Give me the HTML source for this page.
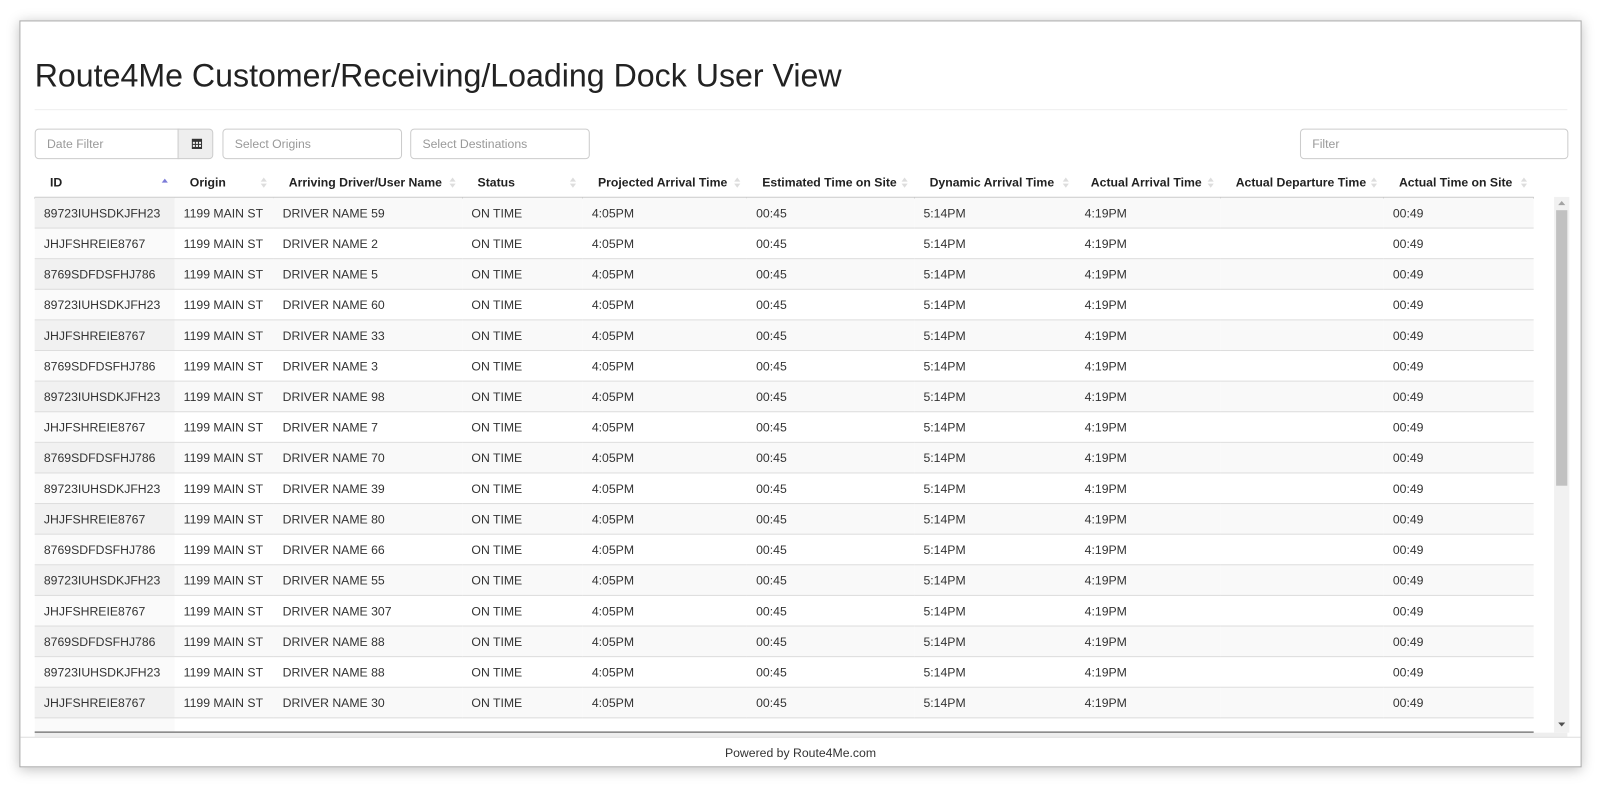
<!DOCTYPE html>
<html><head><meta charset="utf-8"><style>
*{box-sizing:border-box;margin:0;padding:0}
body{width:1600px;height:787px;background:#fff;font-family:"Liberation Sans",Arial,sans-serif;color:#333;position:relative;overflow:hidden}
.wrap{position:absolute;left:0;top:0;width:1568px;height:771px;transform:scale(1.0204);transform-origin:0 0}
.panel{position:absolute;left:19px;top:20px;width:1531px;height:732px;border:1px solid #aaa;box-shadow:0 2px 12px rgba(0,0,0,.25);background:#fff}
h1{position:absolute;left:14px;top:35px;font-size:31.5px;font-weight:normal;color:#222;white-space:nowrap}
.hr{position:absolute;left:14px;top:86px;width:1502px;height:1px;background:#eee}
.inp{position:absolute;top:105px;height:30px;border:1px solid #ccc;border-radius:4px;font-size:12px;color:#999;padding:7px 11px;background:#fff}
.cal{position:absolute;left:154px;top:105px;width:35px;height:30px;border:1px solid #ccc;border-radius:0 4px 4px 0;background:#eee}
table{border-collapse:collapse;table-layout:fixed;position:absolute;left:14px;width:1469px;font-size:12px}
th{height:30px;text-align:left;font-weight:bold;color:#222;padding:0 0 0 15px;position:relative;white-space:nowrap}
th .s{position:absolute;right:6px;top:9px;width:7px;height:12px}
td{height:30px;padding:0 0 0 9px;white-space:nowrap;border-top:1px solid #ddd;color:#333}
tr.o td{background:#f9f9f9}
tr.o td:first-child{background:#f1f1f1}
tr.e td:first-child{background:#fafafa}
.body{position:absolute;left:0;top:172px;width:1500px;height:525px;overflow:hidden}
.foot{position:absolute;left:0;top:701px;width:1529px;height:30px;border-top:1px solid #ddd;text-align:center;font-size:12px;line-height:30px;color:#333}
</style></head><body>
<div class="wrap">
<div class="panel">
<h1>Route4Me Customer/Receiving/Loading Dock User View</h1>
<div class="hr"></div>
<div class="inp" style="left:14px;width:142px;border-radius:4px 0 0 4px">Date Filter</div>
<div class="cal"><svg width="35" height="28" viewBox="0 0 35 28"><rect x="13" y="9" width="10" height="10" fill="#333"/><g fill="#eee"><rect x="14" y="12" width="2" height="2"/><rect x="17" y="12" width="2" height="2"/><rect x="20" y="12" width="2" height="2"/><rect x="14" y="15" width="2" height="2"/><rect x="17" y="15" width="2" height="2"/><rect x="20" y="15" width="2" height="2"/></g></svg></div>
<div class="inp" style="left:198px;width:176px">Select Origins</div>
<div class="inp" style="left:382px;width:176px">Select Destinations</div>
<div class="inp" style="left:1254px;width:263px">Filter</div>
<table style="top:143px;border-bottom:2px solid #333">
<colgroup><col style="width:137px"><col style="width:97px"><col style="width:185px"><col style="width:118px"><col style="width:161px"><col style="width:164px"><col style="width:158px"><col style="width:142px"><col style="width:160px"><col style="width:147px"></colgroup>
<tr>
<th>ID<svg class="s" viewBox="0 0 7 12"><path d="M0.5 6L3.5 2 6.5 6Z" fill="#7b7bd8"/></svg></th>
<th>Origin<svg class="s" viewBox="0 0 7 12"><path d="M0.5 5L3.5 1 6.5 5ZM0.5 7L3.5 11 6.5 7Z" fill="#ddd"/></svg></th>
<th>Arriving Driver/User Name<svg class="s" viewBox="0 0 7 12"><path d="M0.5 5L3.5 1 6.5 5ZM0.5 7L3.5 11 6.5 7Z" fill="#ddd"/></svg></th>
<th>Status<svg class="s" viewBox="0 0 7 12"><path d="M0.5 5L3.5 1 6.5 5ZM0.5 7L3.5 11 6.5 7Z" fill="#ddd"/></svg></th>
<th>Projected Arrival Time<svg class="s" viewBox="0 0 7 12"><path d="M0.5 5L3.5 1 6.5 5ZM0.5 7L3.5 11 6.5 7Z" fill="#ddd"/></svg></th>
<th>Estimated Time on Site<svg class="s" viewBox="0 0 7 12"><path d="M0.5 5L3.5 1 6.5 5ZM0.5 7L3.5 11 6.5 7Z" fill="#ddd"/></svg></th>
<th>Dynamic Arrival Time<svg class="s" viewBox="0 0 7 12"><path d="M0.5 5L3.5 1 6.5 5ZM0.5 7L3.5 11 6.5 7Z" fill="#ddd"/></svg></th>
<th>Actual Arrival Time<svg class="s" viewBox="0 0 7 12"><path d="M0.5 5L3.5 1 6.5 5ZM0.5 7L3.5 11 6.5 7Z" fill="#ddd"/></svg></th>
<th>Actual Departure Time<svg class="s" viewBox="0 0 7 12"><path d="M0.5 5L3.5 1 6.5 5ZM0.5 7L3.5 11 6.5 7Z" fill="#ddd"/></svg></th>
<th>Actual Time on Site<svg class="s" viewBox="0 0 7 12"><path d="M0.5 5L3.5 1 6.5 5ZM0.5 7L3.5 11 6.5 7Z" fill="#ddd"/></svg></th>
</tr></table>
<div class="body">
<table style="top:0">
<colgroup><col style="width:137px"><col style="width:97px"><col style="width:185px"><col style="width:118px"><col style="width:161px"><col style="width:164px"><col style="width:158px"><col style="width:142px"><col style="width:160px"><col style="width:147px"></colgroup>
<tr class="o"><td>89723IUHSDKJFH23</td><td>1199 MAIN ST</td><td>DRIVER NAME 59</td><td>ON TIME</td><td>4:05PM</td><td>00:45</td><td>5:14PM</td><td>4:19PM</td><td></td><td>00:49</td></tr>
<tr class="e"><td>JHJFSHREIE8767</td><td>1199 MAIN ST</td><td>DRIVER NAME 2</td><td>ON TIME</td><td>4:05PM</td><td>00:45</td><td>5:14PM</td><td>4:19PM</td><td></td><td>00:49</td></tr>
<tr class="o"><td>8769SDFDSFHJ786</td><td>1199 MAIN ST</td><td>DRIVER NAME 5</td><td>ON TIME</td><td>4:05PM</td><td>00:45</td><td>5:14PM</td><td>4:19PM</td><td></td><td>00:49</td></tr>
<tr class="e"><td>89723IUHSDKJFH23</td><td>1199 MAIN ST</td><td>DRIVER NAME 60</td><td>ON TIME</td><td>4:05PM</td><td>00:45</td><td>5:14PM</td><td>4:19PM</td><td></td><td>00:49</td></tr>
<tr class="o"><td>JHJFSHREIE8767</td><td>1199 MAIN ST</td><td>DRIVER NAME 33</td><td>ON TIME</td><td>4:05PM</td><td>00:45</td><td>5:14PM</td><td>4:19PM</td><td></td><td>00:49</td></tr>
<tr class="e"><td>8769SDFDSFHJ786</td><td>1199 MAIN ST</td><td>DRIVER NAME 3</td><td>ON TIME</td><td>4:05PM</td><td>00:45</td><td>5:14PM</td><td>4:19PM</td><td></td><td>00:49</td></tr>
<tr class="o"><td>89723IUHSDKJFH23</td><td>1199 MAIN ST</td><td>DRIVER NAME 98</td><td>ON TIME</td><td>4:05PM</td><td>00:45</td><td>5:14PM</td><td>4:19PM</td><td></td><td>00:49</td></tr>
<tr class="e"><td>JHJFSHREIE8767</td><td>1199 MAIN ST</td><td>DRIVER NAME 7</td><td>ON TIME</td><td>4:05PM</td><td>00:45</td><td>5:14PM</td><td>4:19PM</td><td></td><td>00:49</td></tr>
<tr class="o"><td>8769SDFDSFHJ786</td><td>1199 MAIN ST</td><td>DRIVER NAME 70</td><td>ON TIME</td><td>4:05PM</td><td>00:45</td><td>5:14PM</td><td>4:19PM</td><td></td><td>00:49</td></tr>
<tr class="e"><td>89723IUHSDKJFH23</td><td>1199 MAIN ST</td><td>DRIVER NAME 39</td><td>ON TIME</td><td>4:05PM</td><td>00:45</td><td>5:14PM</td><td>4:19PM</td><td></td><td>00:49</td></tr>
<tr class="o"><td>JHJFSHREIE8767</td><td>1199 MAIN ST</td><td>DRIVER NAME 80</td><td>ON TIME</td><td>4:05PM</td><td>00:45</td><td>5:14PM</td><td>4:19PM</td><td></td><td>00:49</td></tr>
<tr class="e"><td>8769SDFDSFHJ786</td><td>1199 MAIN ST</td><td>DRIVER NAME 66</td><td>ON TIME</td><td>4:05PM</td><td>00:45</td><td>5:14PM</td><td>4:19PM</td><td></td><td>00:49</td></tr>
<tr class="o"><td>89723IUHSDKJFH23</td><td>1199 MAIN ST</td><td>DRIVER NAME 55</td><td>ON TIME</td><td>4:05PM</td><td>00:45</td><td>5:14PM</td><td>4:19PM</td><td></td><td>00:49</td></tr>
<tr class="e"><td>JHJFSHREIE8767</td><td>1199 MAIN ST</td><td>DRIVER NAME 307</td><td>ON TIME</td><td>4:05PM</td><td>00:45</td><td>5:14PM</td><td>4:19PM</td><td></td><td>00:49</td></tr>
<tr class="o"><td>8769SDFDSFHJ786</td><td>1199 MAIN ST</td><td>DRIVER NAME 88</td><td>ON TIME</td><td>4:05PM</td><td>00:45</td><td>5:14PM</td><td>4:19PM</td><td></td><td>00:49</td></tr>
<tr class="e"><td>89723IUHSDKJFH23</td><td>1199 MAIN ST</td><td>DRIVER NAME 88</td><td>ON TIME</td><td>4:05PM</td><td>00:45</td><td>5:14PM</td><td>4:19PM</td><td></td><td>00:49</td></tr>
<tr class="o"><td>JHJFSHREIE8767</td><td>1199 MAIN ST</td><td>DRIVER NAME 30</td><td>ON TIME</td><td>4:05PM</td><td>00:45</td><td>5:14PM</td><td>4:19PM</td><td></td><td>00:49</td></tr>
<tr class="e"><td></td><td></td><td></td><td></td><td></td><td></td><td></td><td></td><td></td><td></td></tr>
</table>
<div style="position:absolute;left:14px;top:524px;width:1469px;height:2px;background:#333"></div>
</div>
<div style="position:absolute;left:14px;top:697px;width:1502px;height:4px;background:#eee"></div>
<div style="position:absolute;left:1503px;top:172px;width:15px;height:525px;background:#f1f1f1">
<div style="position:absolute;left:2px;top:13px;width:11px;height:270px;background:#c1c1c1"></div>
<svg style="position:absolute;left:4px;top:4px" width="7" height="5"><path d="M0 4L3.5 0 7 4Z" fill="#a3a3a3"/></svg>
<svg style="position:absolute;left:4px;top:515px" width="7" height="5"><path d="M0 0L3.5 4 7 0Z" fill="#505050"/></svg>
</div>
<div class="foot">Powered by Route4Me.com</div>
</div>
</div>
</body></html>
